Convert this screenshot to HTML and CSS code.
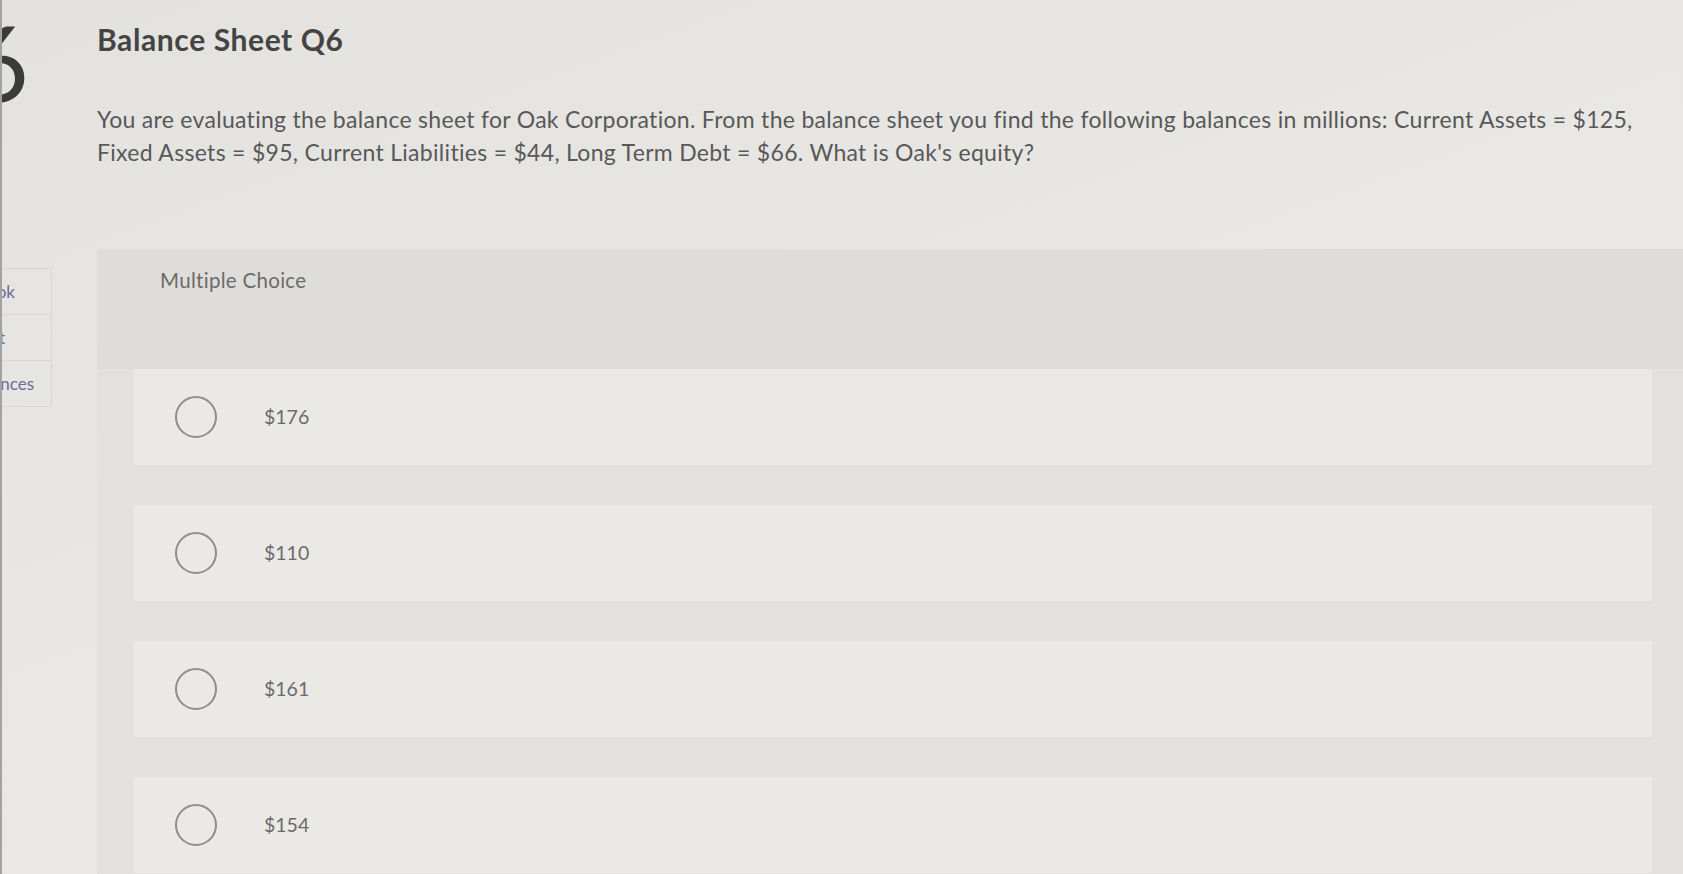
FILE: index.html
```html
<!DOCTYPE html>
<html lang="en">
<head>
<meta charset="utf-8">
<title>Balance Sheet Q6</title>
<link rel="stylesheet" href="styles.css">
</head>
<body>
<div class="page">
  <aside class="sidebar">
    <div class="qnum">6</div>
    <ul class="side-nav">
      <li class="side-item item-ebook"><span>eBook</span></li>
      <li class="side-item item-print"><span>Print</span></li>
      <li class="side-item item-refs"><span>References</span></li>
    </ul>
  </aside>
  <main class="main">
    <h1 class="title">Balance Sheet Q6</h1>
    <p class="question">You are evaluating the balance sheet for Oak Corporation. From the balance sheet you find the following balances in millions: Current Assets = $125, Fixed Assets = $95, Current Liabilities = $44, Long Term Debt = $66. What is Oak's equity?</p>
    <section class="choices">
      <div class="choices-head">Multiple Choice</div>
      <div class="choice-list">
        <label class="choice"><span class="radio"></span><span class="choice-text">$176</span></label>
        <label class="choice"><span class="radio"></span><span class="choice-text">$110</span></label>
        <label class="choice"><span class="radio"></span><span class="choice-text">$161</span></label>
        <label class="choice"><span class="radio"></span><span class="choice-text">$154</span></label>
      </div>
    </section>
  </main>
</div>
</body>
</html>
```

FILE: styles.css
```css
html, body {
  margin: 0;
  padding: 0;
  height: 100%;
  overflow: hidden;
}
body {
  font-family: Lato, "Open Sans", "Liberation Sans", sans-serif;
  background: linear-gradient(160deg, #e3e2df 0%, #e8e7e4 45%, #edece9 100%);
  color: #555;
}
.page {
  display: flex;
  height: 874px;
}
.sidebar {
  width: 52px;
  flex: 0 0 52px;
  overflow: hidden;
  border-left: 2px solid #a3a29f;
  box-sizing: border-box;
}
.qnum {
  font-size: 105px;
  line-height: 1;
  margin-top: 9px;
  margin-left: -34px;
  color: #3b3b3b;
  font-weight: 400;
}
.side-nav {
  list-style: none;
  margin: 154px 0 0 0;
  padding: 0;
  border-top: 1px solid #d9d7d3;
}
.side-item {
  height: 45px;
  display: flex;
  align-items: center;
  justify-content: flex-end;
  white-space: nowrap;
  border-bottom: 1px solid #d9d7d3;
  border-right: 1px solid #d9d7d3;
  font-size: 17px;
  color: #6e6b99;
}
.item-ebook { padding-right: 36px; }
.item-print { padding-right: 46px; }
.item-refs { padding-right: 17px; }

.main {
  flex: 1;
  padding-left: 45px;
  min-width: 0;
}
.title {
  margin: 21px 0 0 0;
  font-size: 30px;
  letter-spacing: 0.6px;
  line-height: 1.2;
  font-weight: 700;
  color: #444;
}
.question {
  margin: 46px 16px 0 0;
  font-size: 23px;
  letter-spacing: 0.3px;
  line-height: 33px;
  color: #585858;
}
.choices {
  margin-top: 80px;
  background: #e2e1dd;
  padding-bottom: 40px;
}
.choices-head {
  height: 120px;
  box-sizing: border-box;
  padding: 19px 0 0 63px;
  font-size: 20.5px;
  letter-spacing: 0.3px;
  line-height: 1.2;
  background: #dfddd9;
  color: #6b6b6b;
}
.choice-list {
  display: flex;
  flex-direction: column;
  gap: 40px;
  margin: 0 31px 0 37px;
}
.choice {
  height: 96px;
  display: flex;
  align-items: center;
  background: #eae9e6;
}
.radio {
  width: 38px;
  height: 38px;
  border: 2px solid #8f8e8b;
  border-radius: 50%;
  margin-left: 41px;
  flex: 0 0 auto;
}
.choice-text {
  margin-left: 47px;
  font-size: 19.5px;
  line-height: 1.2;
  color: #6a6a6a;
}
```
